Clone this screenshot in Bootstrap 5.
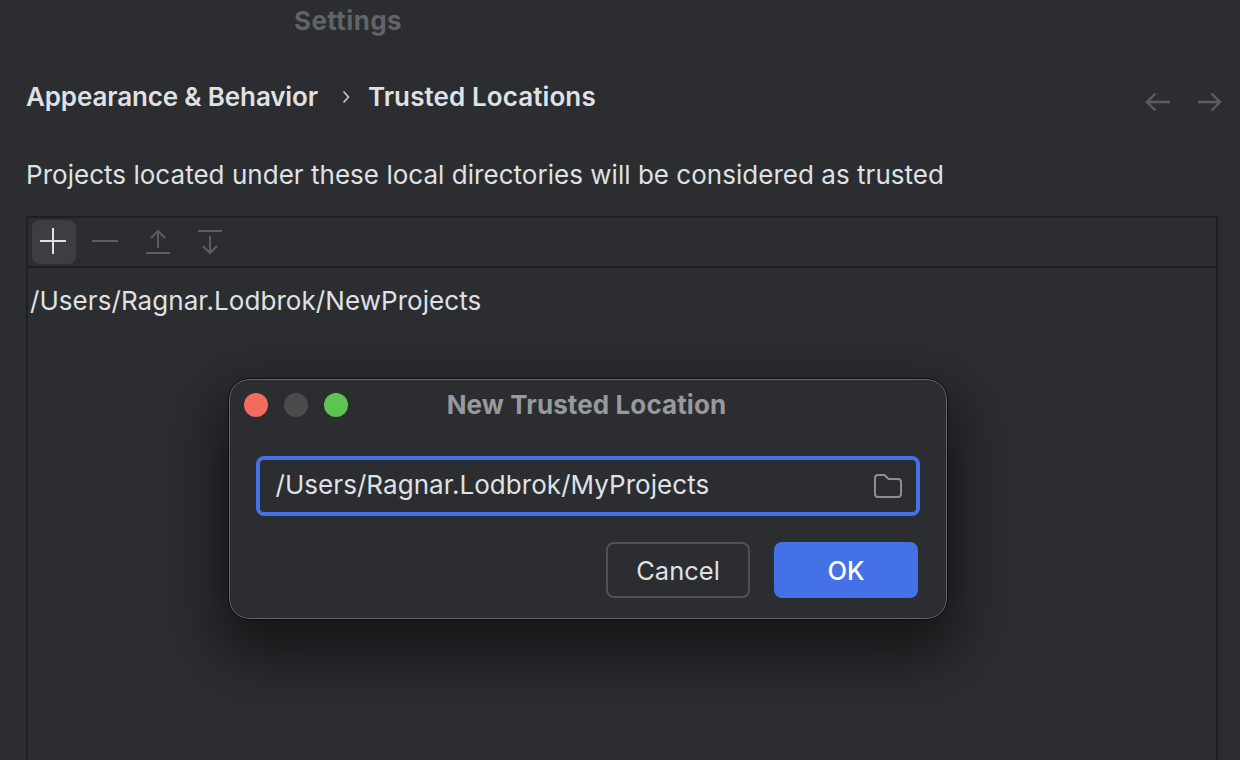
<!DOCTYPE html>
<html lang="en">
<head>
    <meta charset="UTF-8">
    <meta name="viewport" content="width=device-width, initial-scale=1.0">
    <title>Settings</title>
    <link href="https://cdn.jsdelivr.net/npm/bootstrap@5.3.0/dist/css/bootstrap.min.css" rel="stylesheet">
    <style>
        html, body { height: 760px; overflow: hidden; }
        body { background: #2b2d30; color: #dfe1e5; font-family: Inter, "Liberation Sans", sans-serif; position: relative; }
        .win-title { height: 42px; padding-left: 294px; font-size: 26px; font-weight: 700; letter-spacing: .4px; line-height: 42px; color: #606368; }
        .crumbs { height: 74px; padding: 36px 18px 0 26px; font-size: 26px; font-weight: 600; line-height: 42px; color: #dfe1e5; }
        .crumb-first { letter-spacing: -.14px; }
        .crumb-last { letter-spacing: .1px; }
        .crumb-sep { width: 50px; padding-left: 6px; }
        .nav-arrows { gap: 26px; padding-top: 10px; }
        .intro { height: 100px; padding: 38px 0 0 26px; font-size: 26px; letter-spacing: .03px; line-height: 42px; margin: 0; }
        .trust-panel { margin: 0 22px 0 26px; height: 544px; border: 2px solid #1e1f22; border-bottom: 0; }
        .tool-strip { height: 50px; border-bottom: 2px solid #1e1f22; padding: 2px 0 0 4px; }
        .tool-btn { width: 44px; height: 44px; border-radius: 8px; flex: none; margin-right: 8px; }
        .tool-btn.is-hover { background: #3c3e43; }
        .path-row { padding: 12px 0 0 2px; font-size: 26px; letter-spacing: .06px; line-height: 42px; }
        .dialog-box { position: absolute; left: 229px; top: 379px; width: 718px; height: 240px; background: #2b2d30; border: 1px solid #66686c; border-radius: 20px; outline: 1px solid #0d0e10; box-shadow: 0 26px 60px 10px rgba(0, 0, 0, .55); }
        .dialog-head { height: 50px; padding-left: 14px; position: relative; }
        .light { width: 24px; height: 24px; border-radius: 50%; margin-right: 16px; }
        .light-red { background: #f26b5e; }
        .light-off { background: #4a4b4d; }
        .light-green { background: #5cc551; }
        .dialog-name { position: absolute; left: 0; right: 0; top: 0; line-height: 50px; text-align: center; font-size: 26px; font-weight: 700; letter-spacing: .1px; color: #97999c; pointer-events: none; }
        .dialog-name span { margin-left: -3px; }
        .path-field { margin: 26px 26px 0 26px; height: 60px; border: 4px solid #4571e6; border-radius: 8px; padding: 0 13px 0 15.5px; font-size: 26px; letter-spacing: .05px; color: #dfe1e5; }
        .path-text { padding-bottom: 4px; }
        .dialog-foot { margin-top: 26px; padding-right: 28px; gap: 24px; }
        .btn.dlg-btn { width: 144px; height: 56px; border-radius: 8px; font-size: 25.5px; line-height: 1; padding: 2px 0 0; color: #dfe1e5; background: transparent; border: 2px solid #4e5157; }
        .btn.dlg-ok { background: #4571e6; border-color: #4571e6; color: #fff; font-weight: 500; }
    </style>
</head>
<body>

    <div class="win-title">Settings</div>

    <div class="crumbs d-flex align-items-center">
        <span class="crumb-first">Appearance &amp; Behavior</span>
        <span class="crumb-sep d-flex justify-content-center">
            <svg width="10" height="16" viewBox="0 0 10 16" fill="none" stroke="#c9cbcf" stroke-width="1.6"><path d="M2.500 2.500 7.500 8l-5 5.500"/></svg>
        </span>
        <span class="crumb-last">Trusted Locations</span>
        <div class="nav-arrows d-flex ms-auto">
            <svg width="26" height="20" viewBox="0 0 26 20" fill="none" stroke="#5a5d63" stroke-width="2.4"><path d="M26 10H3M11.500 1.500 3 10l8.500 8.500"/></svg>
            <svg width="26" height="20" viewBox="0 0 26 20" fill="none" stroke="#5a5d63" stroke-width="2.4"><path d="M2 10h22M15.500 1.500 24 10l-8.500 8.500"/></svg>
        </div>
    </div>

    <p class="intro">Projects located under these local directories will be considered as trusted</p>

    <div class="trust-panel">
        <div class="tool-strip d-flex align-items-start">
            <div class="tool-btn is-hover d-flex align-items-center justify-content-center">
                <svg width="28" height="28" viewBox="0 0 28 28" fill="none" stroke="#dfe1e5" stroke-width="2"><path d="M13 0v26M0 13h26"/></svg>
            </div>
            <div class="tool-btn d-flex align-items-center justify-content-center">
                <svg width="28" height="28" viewBox="0 0 28 28" fill="none" stroke="#5a5d63" stroke-width="2"><path d="M0 13h26"/></svg>
            </div>
            <div class="tool-btn d-flex align-items-center justify-content-center">
                <svg width="28" height="28" viewBox="0 0 28 28" fill="none" stroke="#5a5d63" stroke-width="2"><path d="M2 25h24M14 20V3M7 10l7-7 7 7"/></svg>
            </div>
            <div class="tool-btn d-flex align-items-center justify-content-center">
                <svg width="28" height="28" viewBox="0 0 28 28" fill="none" stroke="#5a5d63" stroke-width="2"><path d="M2 3h24M14 8v17M7 18l7 7 7-7"/></svg>
            </div>
        </div>
        <div class="path-row">/Users/Ragnar.Lodbrok/NewProjects</div>
    </div>

    <div class="dialog-box">
        <div class="dialog-head d-flex align-items-center">
            <span class="light light-red"></span>
            <span class="light light-off"></span>
            <span class="light light-green"></span>
            <div class="dialog-name"><span>New Trusted Location</span></div>
        </div>
        <div class="path-field d-flex align-items-center justify-content-between">
            <span class="path-text">/Users/Ragnar.Lodbrok/MyProjects</span>
            <svg width="30" height="26" viewBox="0 0 30 26" fill="none" stroke="#8c8e92" stroke-width="2"><path d="M2 5a3 3 0 0 1 3-3h6.500l4 4H25a3 3 0 0 1 3 3v12a3 3 0 0 1-3 3H5a3 3 0 0 1-3-3z"/></svg>
        </div>
        <div class="dialog-foot d-flex justify-content-end">
            <button type="button" class="btn dlg-btn">Cancel</button>
            <button type="button" class="btn dlg-btn dlg-ok">OK</button>
        </div>
    </div>

    <script src="https://cdn.jsdelivr.net/npm/bootstrap@5.3.0/dist/js/bootstrap.bundle.min.js"></script>
</body>
</html>
